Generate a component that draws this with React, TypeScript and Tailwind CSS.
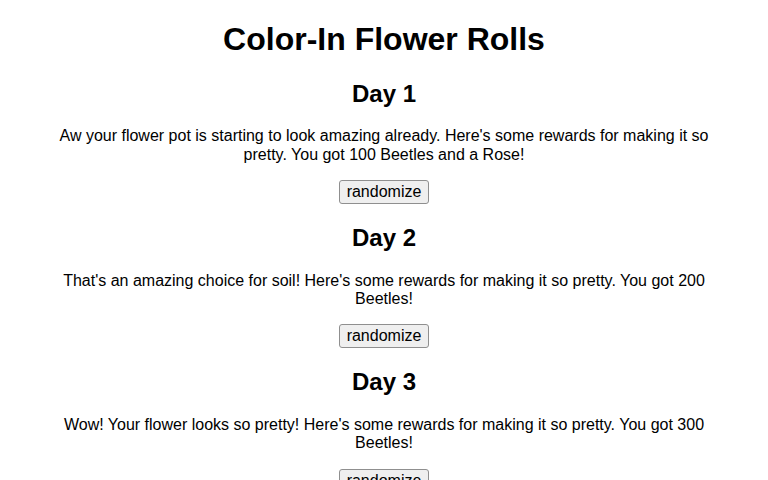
import React from "react";

const days = [
  {
    title: "Day 1",
    text: "Aw your flower pot is starting to look amazing already. Here's some rewards for making it so pretty. You got 100 Beetles and a Rose!",
  },
  {
    title: "Day 2",
    text: "That's an amazing choice for soil! Here's some rewards for making it so pretty. You got 200 Beetles!",
  },
  {
    title: "Day 3",
    text: "Wow! Your flower looks so pretty! Here's some rewards for making it so pretty. You got 300 Beetles!",
  },
];

export default function App() {
  return (
    <div className="w-full bg-white text-black text-center font-['Liberation_Sans',Arial,sans-serif]">
      <div className="mx-auto w-[680px] flex flex-col items-center">
        <h1 className="mt-[21.44px] text-[32px] leading-[37px] font-bold">Color-In Flower Rolls</h1>
        {days.map((d, i) => (
          <section key={i} className="w-full flex flex-col items-center">
            <h2 className={(i === 0 ? "mt-[21.44px]" : "mt-[19.92px]") + " text-[24px] leading-[27.6px] font-bold"}>
              {d.title}
            </h2>
            <p className="mt-[19.92px] text-[16px] leading-[18.4px] w-full">{d.text}</p>
            <div className="mt-[16px] h-[24px] flex">
              <button className="h-[24px] w-[90px] px-0 text-[16px] leading-[18px] bg-[#efefef] border border-[#8f8f8f] rounded-[3px] text-black">
                randomize
              </button>
            </div>
          </section>
        ))}
      </div>
    </div>
  );
}
